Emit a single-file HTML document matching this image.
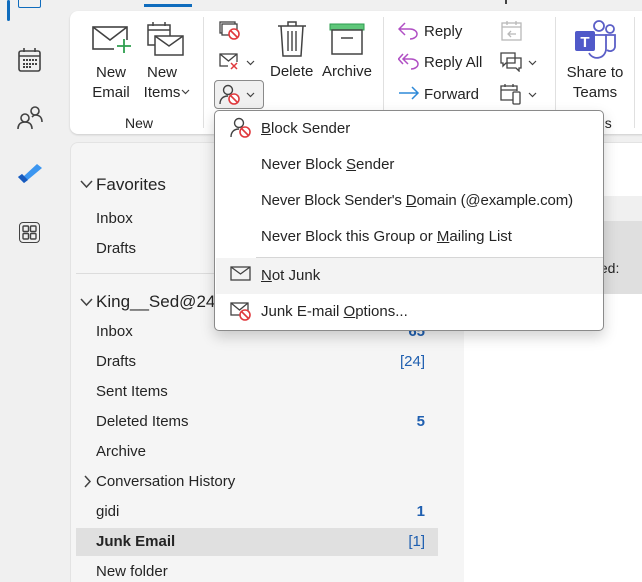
<!DOCTYPE html>
<html><head><meta charset="utf-8"><style>
*{margin:0;padding:0;box-sizing:border-box}
body{width:642px;height:575px;overflow:hidden;background:#f0f0f0;font-family:"Liberation Sans",sans-serif;color:#242424;position:relative}
.abs{position:absolute}
.t{position:absolute;font-size:15px;white-space:nowrap}
.c{text-align:center}
.blue{color:#1f5fb0}
</style></head><body>
<!-- left rail -->
<div class="abs" style="left:7px;top:0;width:3px;height:21px;background:#0f6cbd;border-radius:2px"></div>
<div class="abs" style="left:18px;top:-8px;width:23px;height:16px;border:1.5px solid #0f6cbd;border-radius:2px"></div>
<svg class="abs" style="left:17px;top:47px" width="26" height="26" viewBox="0 0 26 26"><rect x="2" y="4" width="21" height="20" rx="2" fill="none" stroke="#424242" stroke-width="1.6"/><line x1="2" y1="9" x2="23" y2="9" stroke="#424242" stroke-width="1.6"/><line x1="7" y1="1" x2="7" y2="5" stroke="#424242" stroke-width="1.6"/><line x1="18" y1="1" x2="18" y2="5" stroke="#424242" stroke-width="1.6"/><g fill="#424242"><rect x="6" y="12" width="2" height="2"/><rect x="9" y="12" width="2" height="2"/><rect x="12" y="12" width="2" height="2"/><rect x="15" y="12" width="2" height="2"/><rect x="18" y="12" width="2" height="2"/><rect x="6" y="16" width="2" height="2"/><rect x="9" y="16" width="2" height="2"/><rect x="12" y="16" width="2" height="2"/><rect x="15" y="16" width="2" height="2"/><rect x="18" y="16" width="2" height="2"/><rect x="6" y="19" width="2" height="2"/><rect x="9" y="19" width="2" height="2"/><rect x="12" y="19" width="2" height="2"/></g></svg>
<svg class="abs" style="left:16px;top:105px" width="28" height="26" viewBox="0 0 28 26"><circle cx="9" cy="13" r="4" fill="none" stroke="#424242" stroke-width="1.6"/><path d="M2 24c0-5 3-7 7-7s7 2 7 7" fill="none" stroke="#424242" stroke-width="1.6"/><circle cx="19" cy="6" r="4" fill="none" stroke="#424242" stroke-width="1.6"/><path d="M16 12c1-1 2-2 3-2 4 0 7 2 7 7" fill="none" stroke="#424242" stroke-width="1.6"/></svg>
<svg class="abs" style="left:16px;top:163px" width="28" height="24" viewBox="0 0 28 24"><path d="M8 20l-6-6 4-3 2 2 13-12 5 4z" fill="#3c96f0"/><path d="M2 14l4-3 6 6-4 3z" fill="#185abd"/></svg>
<div class="abs" style="left:19px;top:222px;width:21px;height:21px;border:1.6px solid #424242;border-radius:4px"></div>
<svg class="abs" style="left:22px;top:225px" width="16" height="16" viewBox="0 0 16 16" fill="none" stroke="#424242" stroke-width="1.4"><rect x="1" y="1" width="5.5" height="5.5" rx="1"/><rect x="8.5" y="1" width="5.5" height="5.5" rx="1"/><rect x="1" y="8.5" width="5.5" height="5.5" rx="1"/><rect x="8.5" y="8.5" width="5.5" height="5.5" rx="1"/></svg>
<!-- top tab -->
<div class="abs" style="left:144px;top:4px;width:48px;height:3px;background:#0f6cbd"></div>
<div class="abs" style="left:505px;top:0;width:2px;height:4px;background:#444"></div>
<!-- ribbon -->
<div class="abs" style="left:70px;top:11px;width:600px;height:123px;background:#fff;border-radius:8px;box-shadow:0 1px 2px rgba(0,0,0,.15)"></div>
<div class="abs" style="left:203px;top:17px;width:1px;height:111px;background:#e0e0e0"></div>
<div class="abs" style="left:383px;top:17px;width:1px;height:111px;background:#e0e0e0"></div>
<div class="abs" style="left:555px;top:17px;width:1px;height:111px;background:#e0e0e0"></div>
<div class="abs" style="left:634px;top:17px;width:1px;height:111px;background:#e0e0e0"></div>
<svg class="abs" style="left:92px;top:26px" width="42" height="28" viewBox="0 0 42 28"><rect x="1" y="1" width="34" height="22" fill="none" stroke="#424242" stroke-width="1.6"/><path d="M1 1l17 13 17-13" fill="none" stroke="#424242" stroke-width="1.6"/><rect x="22" y="14" width="20" height="14" fill="#fff"/><path d="M32 13v14M25 20h14" stroke="#2e9e4f" stroke-width="1.8"/></svg>
<div class="t c" style="left:86px;top:63px;width:50px;line-height:20px">New<br>Email</div>
<svg class="abs" style="left:147px;top:21px" width="38" height="36" viewBox="0 0 38 36"><rect x="1" y="4" width="22" height="20" fill="none" stroke="#424242" stroke-width="1.5"/><line x1="1" y1="9" x2="23" y2="9" stroke="#424242" stroke-width="1.5"/><path d="M6 1v4M18 1v4" stroke="#424242" stroke-width="1.5"/><rect x="8" y="15" width="28" height="19" fill="#fff" stroke="#424242" stroke-width="1.5"/><path d="M8 15l14 10 14-10" fill="none" stroke="#424242" stroke-width="1.5"/></svg>
<div class="t c" style="left:134px;top:63px;width:56px;line-height:20px">New<br>Items</div>
<svg class="abs" style="left:181px;top:89px" width="9" height="6" viewBox="0 0 9 6"><path d="M1 1l3.5 3.5L8 1" fill="none" stroke="#424242" stroke-width="1.2"/></svg>
<div class="t c" style="left:114px;top:115px;width:50px;font-size:14px">New</div>
<!-- junk icons -->
<svg class="abs" style="left:219px;top:21px" width="22" height="20" viewBox="0 0 22 20"><rect x="1" y="1" width="15" height="11" fill="none" stroke="#424242" stroke-width="1.3"/><rect x="3" y="3" width="15" height="11" fill="#fff" stroke="#424242" stroke-width="1.3"/><circle cx="15" cy="13" r="5" fill="#fff" stroke="#e03a3e" stroke-width="1.6"/><path d="M12 10l6 6" stroke="#e03a3e" stroke-width="1.6"/></svg>
<svg class="abs" style="left:219px;top:52px" width="22" height="20" viewBox="0 0 22 20"><rect x="1" y="2" width="17" height="12" fill="none" stroke="#424242" stroke-width="1.3"/><path d="M1 2l8.5 7 8.5-7" fill="none" stroke="#424242" stroke-width="1.3"/><rect x="9" y="10" width="12" height="10" fill="#fff"/><path d="M12 11l6 6M18 11l-6 6" stroke="#e03a3e" stroke-width="1.5"/></svg>
<svg class="abs" style="left:246px;top:60px" width="9" height="6" viewBox="0 0 9 6"><path d="M1 1l3.5 3.5L8 1" fill="none" stroke="#424242" stroke-width="1.2"/></svg>
<div class="abs" style="left:214px;top:80px;width:50px;height:29px;border:1px solid #8a8a8a;border-radius:4px;background:#f0f0f0"></div>
<svg class="abs" style="left:219px;top:84px" width="22" height="22" viewBox="0 0 22 22"><circle cx="9" cy="6" r="4.5" fill="none" stroke="#424242" stroke-width="1.4"/><path d="M1 20c0-5 3-8 8-8" fill="none" stroke="#424242" stroke-width="1.4"/><circle cx="15" cy="15" r="5" fill="#fff" stroke="#e03a3e" stroke-width="1.6"/><path d="M12 12l6 6" stroke="#e03a3e" stroke-width="1.6"/></svg>
<svg class="abs" style="left:246px;top:92px" width="9" height="6" viewBox="0 0 9 6"><path d="M1 1l3.5 3.5L8 1" fill="none" stroke="#424242" stroke-width="1.2"/></svg>
<!-- delete -->
<svg class="abs" style="left:277px;top:20px" width="30" height="37" viewBox="0 0 30 37"><path d="M1 6h28M11 6V2h8v4" fill="none" stroke="#424242" stroke-width="1.5"/><path d="M4 6l2 30h18l2-30" fill="none" stroke="#424242" stroke-width="1.5"/><path d="M11 11v20M15 11v20M19 11v20" stroke="#424242" stroke-width="1.4"/></svg>
<div class="t" style="left:270px;top:63px">Delete</div>
<svg class="abs" style="left:329px;top:23px" width="36" height="32" viewBox="0 0 36 32"><rect x="1" y="1" width="34" height="6" fill="#5fc77a" stroke="#2e9e4f" stroke-width="1"/><rect x="3" y="7" width="30" height="24" fill="none" stroke="#424242" stroke-width="1.5"/><path d="M12 15h12" stroke="#424242" stroke-width="1.5"/></svg>
<div class="t" style="left:322px;top:63px">Archive</div>
<!-- reply group -->
<svg class="abs" style="left:398px;top:22px" width="22" height="18" viewBox="0 0 22 18"><path d="M7 1L1 7l6 6M1 7h11a7 5 0 0 1 0 10" fill="none" stroke="#b04fc4" stroke-width="1.5"/></svg>
<div class="t" style="left:424px;top:23px">Reply</div>
<svg class="abs" style="left:398px;top:53px" width="22" height="18" viewBox="0 0 22 18"><path d="M5 1L0.5 6 5 11M10 1L5 6l5 5M5 6h8a7 5 0 0 1 0 10" fill="none" stroke="#b04fc4" stroke-width="1.5"/></svg>
<div class="t" style="left:424px;top:54px">Reply All</div>
<svg class="abs" style="left:398px;top:86px" width="22" height="14" viewBox="0 0 22 14"><path d="M1 7h19M14 1l6 6-6 6" fill="none" stroke="#2f8ad8" stroke-width="1.5"/></svg>
<div class="t" style="left:424px;top:86px">Forward</div>
<svg class="abs" style="left:501px;top:20px" width="22" height="22" viewBox="0 0 22 22"><rect x="1" y="3" width="19" height="17" fill="none" stroke="#b8b8b8" stroke-width="1.3"/><path d="M1 7h19M6 1v4M15 1v4M10 11l-3 3 3 3M7 14h8" fill="none" stroke="#b8b8b8" stroke-width="1.3"/></svg>
<svg class="abs" style="left:500px;top:52px" width="22" height="20" viewBox="0 0 22 20"><path d="M1 1h14v10H6l-3 3v-3H1z M7 6h14v10h-2v3l-3-3H7z" fill="none" stroke="#424242" stroke-width="1.3"/></svg>
<svg class="abs" style="left:528px;top:60px" width="9" height="6" viewBox="0 0 9 6"><path d="M1 1l3.5 3.5L8 1" fill="none" stroke="#424242" stroke-width="1.2"/></svg>
<svg class="abs" style="left:500px;top:83px" width="22" height="22" viewBox="0 0 22 22"><path d="M13 17H1V3h16v5M1 7h16M5 1v3M13 1v3" fill="none" stroke="#424242" stroke-width="1.3"/><rect x="13" y="9" width="7" height="12" rx="1" fill="#fff" stroke="#424242" stroke-width="1.3"/></svg>
<svg class="abs" style="left:528px;top:92px" width="9" height="6" viewBox="0 0 9 6"><path d="M1 1l3.5 3.5L8 1" fill="none" stroke="#424242" stroke-width="1.2"/></svg>
<!-- teams -->
<svg class="abs" style="left:574px;top:19px" width="44" height="40" viewBox="0 0 44 40"><circle cx="25" cy="7" r="5" fill="none" stroke="#5b5fc7" stroke-width="1.8"/><circle cx="36" cy="10" r="4" fill="none" stroke="#5b5fc7" stroke-width="1.8"/><path d="M31 16h10v12a5 5 0 0 1-8 3" fill="none" stroke="#5b5fc7" stroke-width="1.8"/><path d="M14 16h18v14a9 9 0 0 1-17 4" fill="#fff" stroke="#5b5fc7" stroke-width="1.8"/><rect x="1" y="12" width="20" height="20" rx="2" fill="#5059c9"/><text x="11" y="28" font-family="Liberation Sans" font-weight="bold" font-size="15" fill="#fff" text-anchor="middle">T</text></svg>
<div class="t c" style="left:562px;top:63px;width:66px;line-height:20px">Share to<br>Teams</div>
<div class="t" style="left:597px;top:115px;font-size:14px">ns</div>
<!-- folder pane -->
<div class="abs" style="left:70px;top:142px;width:394px;height:440px;background:#f5f5f5;border-top-left-radius:8px;border:1px solid #e3e3e3;border-right:none;border-bottom:none"></div>
<div class="abs" style="left:464px;top:142px;width:180px;height:440px;background:#fff;border-top:1px solid #e3e3e3"></div>
<div class="abs" style="left:464px;top:196px;width:180px;height:25px;background:#f0f0f0"></div>
<div class="abs" style="left:464px;top:221px;width:180px;height:73px;background:#dfdfdf"></div>
<div class="t" style="left:596px;top:260px;font-size:14px">ted:</div>
<svg class="abs" style="left:80px;top:180px" width="13" height="9" viewBox="0 0 13 9"><path d="M1 1l5.5 6 5.5-6" fill="none" stroke="#424242" stroke-width="1.5"/></svg>
<div class="t" style="left:96px;top:175px;font-size:17px">Favorites</div>
<div class="t" style="left:96px;top:210px">Inbox</div>
<div class="t" style="left:96px;top:240px">Drafts</div>
<div class="abs" style="left:76px;top:273px;width:362px;height:1px;background:#dcdcdc"></div>
<svg class="abs" style="left:80px;top:298px" width="13" height="9" viewBox="0 0 13 9"><path d="M1 1l5.5 6 5.5-6" fill="none" stroke="#424242" stroke-width="1.5"/></svg>
<div class="t" style="left:96px;top:292px;font-size:17px">King__Sed@24</div>
<div class="t" style="left:96px;top:323px">Inbox</div><div class="t blue" style="right:217px;top:323px;font-weight:bold">65</div>
<div class="t" style="left:96px;top:353px">Drafts</div><div class="t blue" style="right:217px;top:353px">[24]</div>
<div class="t" style="left:96px;top:383px">Sent Items</div>
<div class="t" style="left:96px;top:413px">Deleted Items</div><div class="t blue" style="right:217px;top:413px;font-weight:bold">5</div>
<div class="t" style="left:96px;top:443px">Archive</div>
<svg class="abs" style="left:84px;top:475px" width="8" height="13" viewBox="0 0 8 13"><path d="M1 1l5 5.5-5 5.5" fill="none" stroke="#424242" stroke-width="1.5"/></svg>
<div class="t" style="left:96px;top:473px">Conversation History</div>
<div class="t" style="left:96px;top:503px">gidi</div><div class="t blue" style="right:217px;top:503px;font-weight:bold">1</div>
<div class="abs" style="left:76px;top:528px;width:362px;height:28px;background:#e0e0e0"></div>
<div class="t" style="left:96px;top:533px;font-weight:bold">Junk Email</div><div class="t blue" style="right:217px;top:533px">[1]</div>
<div class="t" style="left:96px;top:563px">New folder</div>
<!-- menu -->
<div class="abs" style="left:214px;top:110px;width:390px;height:221px;background:#fff;border:1px solid #8a8a8a;border-radius:5px;box-shadow:0 6px 14px rgba(0,0,0,.18);overflow:hidden">
 <div class="abs" style="left:1px;top:147px;width:387px;height:36px;background:#f3f3f3"></div>
 <div class="abs" style="left:41px;top:146px;width:347px;height:1px;background:#d6d6d6"></div>
</div>
<svg class="abs" style="left:230px;top:117px" width="22" height="22" viewBox="0 0 22 22"><circle cx="9" cy="6" r="4.5" fill="none" stroke="#424242" stroke-width="1.4"/><path d="M1 20c0-5 3-8 8-8" fill="none" stroke="#424242" stroke-width="1.4"/><circle cx="15" cy="15" r="5" fill="#fff" stroke="#e03a3e" stroke-width="1.6"/><path d="M12 12l6 6" stroke="#e03a3e" stroke-width="1.6"/></svg>
<div class="t" style="left:261px;top:120px"><u>B</u>lock Sender</div>
<div class="t" style="left:261px;top:156px">Never Block <u>S</u>ender</div>
<div class="t" style="left:261px;top:192px;letter-spacing:-0.15px">Never Block Sender's <u>D</u>omain (@example.com)</div>
<div class="t" style="left:261px;top:228px">Never Block this Group or <u>M</u>ailing List</div>
<svg class="abs" style="left:230px;top:266px" width="21" height="15" viewBox="0 0 21 15"><rect x="1" y="1" width="19" height="13" fill="none" stroke="#424242" stroke-width="1.3"/><path d="M1 1l9.5 7 9.5-7" fill="none" stroke="#424242" stroke-width="1.3"/></svg>
<div class="t" style="left:261px;top:267px"><u>N</u>ot Junk</div>
<svg class="abs" style="left:230px;top:301px" width="22" height="20" viewBox="0 0 22 20"><rect x="1" y="2" width="17" height="12" fill="none" stroke="#424242" stroke-width="1.3"/><path d="M1 2l8.5 7 8.5-7" fill="none" stroke="#424242" stroke-width="1.3"/><circle cx="15" cy="14" r="5" fill="#fff" stroke="#e03a3e" stroke-width="1.6"/><path d="M12 11l6 6" stroke="#e03a3e" stroke-width="1.6"/></svg>
<div class="t" style="left:261px;top:303px">Junk E-mail <u>O</u>ptions...</div>
</body></html>
